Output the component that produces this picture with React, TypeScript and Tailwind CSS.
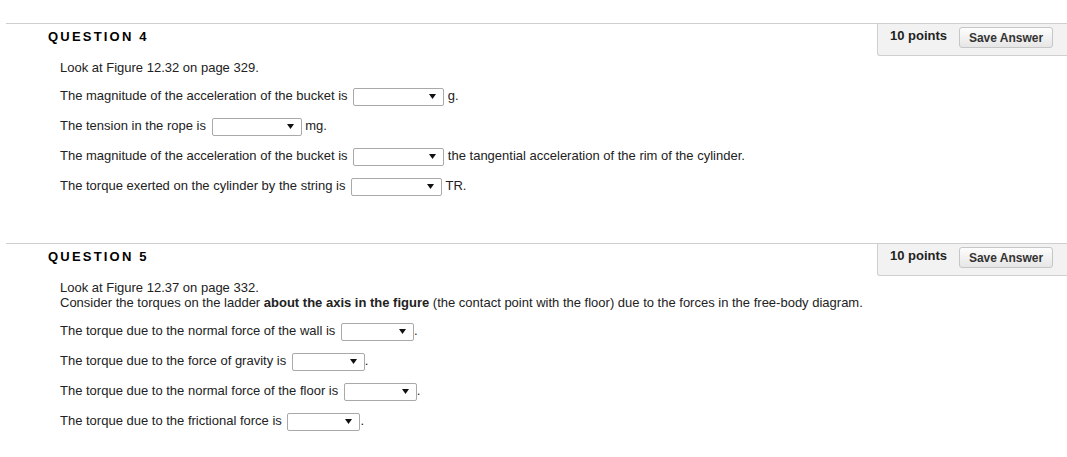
import React from "react";

type Row = { pre: string; w: number; post: string };

const q4: Row[] = [
  { pre: "The magnitude of the acceleration of the bucket is", w: 91, post: " g." },
  { pre: "The tension in the rope is", w: 90, post: " mg." },
  { pre: "The magnitude of the acceleration of the bucket is", w: 91, post: " the tangential acceleration of the rim of the cylinder." },
  { pre: "The torque exerted on the cylinder by the string is", w: 91, post: " TR." },
];

const q5: Row[] = [
  { pre: "The torque due to the normal force of the wall is", w: 73, post: "." },
  { pre: "The torque due to the force of gravity is", w: 73, post: "." },
  { pre: "The torque due to the normal force of the floor is", w: 73, post: "." },
  { pre: "The torque due to the frictional force is", w: 73, post: "." },
];

function Dropdown({ w }: { w: number }) {
  return (
    <span
      className="inline-flex ml-[2px] h-[18px] align-middle items-center justify-end pr-[7px] border border-[#a9a9a9] rounded-[2px] bg-white"
      style={{ width: w }}
    >
      <svg width="7" height="5" viewBox="0 0 7 5">
        <polygon points="0,0 7,0 3.5,5" fill="#111" />
      </svg>
    </span>
  );
}

function Answers({ rows }: { rows: Row[] }) {
  return (
    <div>
      {rows.map((r, i) => (
        <div key={i} className="h-[30px] leading-[30px] whitespace-nowrap">
          {r.pre} <Dropdown w={r.w} />
          {r.post}
        </div>
      ))}
    </div>
  );
}

function Header({ n }: { n: number }) {
  return (
    <div className="flex">
      <div className="flex-1 pl-[42px] pt-[5px]">
        <h2 className="text-[13px] leading-[16px] font-bold tracking-[2.2px] text-black">QUESTION {n}</h2>
      </div>
      <div className="w-[190px] h-[32px] flex items-start pt-[3px] border-l border-b border-[#cfcfcf] bg-[#f2f2f2] rounded-bl-[3px]">
        <span className="ml-[12px] mt-[1px] leading-[16px] text-[13px] font-bold text-[#222]">10 points</span>
        <button className="ml-[12px] h-[21px] w-[94px] border border-[#c6c6c6] rounded-[3px] bg-gradient-to-b from-[#fdfdfd] to-[#e6e6e6] text-[12px] font-bold text-[#333]">
          Save Answer
        </button>
      </div>
    </div>
  );
}

export default function App() {
  return (
    <div className="w-[1067px] h-[457px] bg-white overflow-hidden text-[13px] text-[#222]" style={{ fontFamily: '"Liberation Sans", Arial, sans-serif' }}>
      <section className="mt-[23px] ml-[6px] border-t border-[#cfcfcf] h-[220px]">
        <Header n={4} />
        <div className="pl-[54px]">
          <p className="mt-[4px] leading-[16px]">Look at Figure 12.32 on page 329.</p>
          <div className="mt-[5px]">
            <Answers rows={q4} />
          </div>
        </div>
      </section>
      <section className="ml-[6px] border-t border-[#cfcfcf]">
        <Header n={5} />
        <div className="pl-[54px]">
          <p className="mt-[4px] leading-[15px]">
            Look at Figure 12.37 on page 332.
            <br />
            Consider the torques on the ladder <b>about the axis in the figure</b> (the contact point with the floor) due to the forces in the free-body diagram.
          </p>
          <div className="mt-[6px]">
            <Answers rows={q5} />
          </div>
        </div>
      </section>
    </div>
  );
}
